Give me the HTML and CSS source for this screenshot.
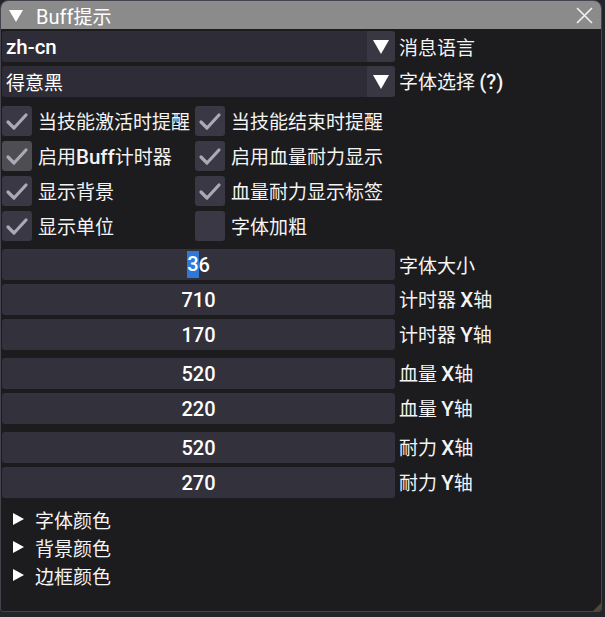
FILE: index.html
```html
<!DOCTYPE html>
<html lang="zh-CN">
<head>
<meta charset="utf-8">
<title>Buff提示</title>
<link rel="stylesheet" href="styles.css">
</head>
<body>
<div class="window">
  <div class="titlebar">
    <svg class="title-arrow" width="14" height="12" viewBox="0 0 14 12"><polygon points="0,0 14,0 7,12" fill="#fff"/></svg>
    <span class="title-text"><span class="latin">Buff</span>提示</span>
    <svg class="close" width="17" height="17" viewBox="0 0 17 17"><path d="M1 1 L16 16 M16 1 L1 16" stroke="#f2f2f2" stroke-width="1.6" fill="none"/></svg>
  </div>
  <div class="content">
    <div class="row">
      <div class="combo"><span class="combo-value latin-b">zh-cn</span><span class="combo-btn"><svg width="16" height="14" viewBox="0 0 16 14"><polygon points="0,0 16,0 8,14" fill="#fff"/></svg></span></div>
      <span class="label">消息语言</span>
    </div>
    <div class="row">
      <div class="combo"><span class="combo-value">得意黑</span><span class="combo-btn"><svg width="16" height="14" viewBox="0 0 16 14"><polygon points="0,0 16,0 8,14" fill="#fff"/></svg></span></div>
      <span class="label">字体选择 <span class="latin-b">(?)</span></span>
    </div>

    <div class="checks">
      <div class="check"><span class="box"><svg width="30" height="30" viewBox="0 0 30 30"><polyline points="6,16 12,22 24,9" class="tick"/></svg></span><span>当技能激活时提醒</span></div>
      <div class="check"><span class="box"><svg width="30" height="30" viewBox="0 0 30 30"><polyline points="6,16 12,22 24,9" class="tick"/></svg></span><span>当技能结束时提醒</span></div>
      <div class="check"><span class="box hover"><svg width="30" height="30" viewBox="0 0 30 30"><polyline points="6,16 12,22 24,9" class="tick"/></svg></span><span>启用<span class="latin-b">Buff</span>计时器</span></div>
      <div class="check"><span class="box"><svg width="30" height="30" viewBox="0 0 30 30"><polyline points="6,16 12,22 24,9" class="tick"/></svg></span><span>启用血量耐力显示</span></div>
      <div class="check"><span class="box"><svg width="30" height="30" viewBox="0 0 30 30"><polyline points="6,16 12,22 24,9" class="tick"/></svg></span><span>显示背景</span></div>
      <div class="check"><span class="box"><svg width="30" height="30" viewBox="0 0 30 30"><polyline points="6,16 12,22 24,9" class="tick"/></svg></span><span>血量耐力显示标签</span></div>
      <div class="check"><span class="box"><svg width="30" height="30" viewBox="0 0 30 30"><polyline points="6,16 12,22 24,9" class="tick"/></svg></span><span>显示单位</span></div>
      <div class="check"><span class="box"></span><span>字体加粗</span></div>
    </div>

    <div class="group">
      <div class="row"><div class="slider"><span class="sel">3</span>6</div><span class="label">字体大小</span></div>
      <div class="row"><div class="slider">710</div><span class="label">计时器 <span class="latin-b">X</span>轴</span></div>
      <div class="row"><div class="slider">170</div><span class="label">计时器 <span class="latin-b">Y</span>轴</span></div>
    </div>
    <div class="group">
      <div class="row"><div class="slider">520</div><span class="label">血量 <span class="latin-b">X</span>轴</span></div>
      <div class="row"><div class="slider">220</div><span class="label">血量 <span class="latin-b">Y</span>轴</span></div>
    </div>
    <div class="group">
      <div class="row"><div class="slider">520</div><span class="label">耐力 <span class="latin-b">X</span>轴</span></div>
      <div class="row"><div class="slider">270</div><span class="label">耐力 <span class="latin-b">Y</span>轴</span></div>
    </div>

    <div class="tree">
      <div class="node"><svg width="11" height="12" viewBox="0 0 11 12"><polygon points="0,0 11,6 0,12" fill="#fff"/></svg><span>字体颜色</span></div>
      <div class="node"><svg width="11" height="12" viewBox="0 0 11 12"><polygon points="0,0 11,6 0,12" fill="#fff"/></svg><span>背景颜色</span></div>
      <div class="node"><svg width="11" height="12" viewBox="0 0 11 12"><polygon points="0,0 11,6 0,12" fill="#fff"/></svg><span>边框颜色</span></div>
    </div>
  </div>
  <span class="grip"></span>
</div>
</body>
</html>
```
FILE: styles.css
```css
html, body {
  margin: 0;
  padding: 0;
  background: #25242b;
}
body {
  width: 605px;
  height: 617px;
  overflow: hidden;
  font-family: "Noto Sans CJK SC", "Noto Sans", sans-serif;
  font-size: 19px;
  color: #f4f4f4;
}
.window {
  position: relative;
  width: 600px;
  height: 610px;
  background: #1c1b1e;
  border: 1px solid #45444d;
  border-radius: 8px 8px 3px 3px;
  overflow: hidden;
}
.titlebar {
  height: 28px;
  background: #8b8b8b;
  display: flex;
  align-items: center;
  padding-left: 8px;
  padding-right: 8px;
  color: #fff;
}
.title-arrow {
  margin-top: 1px;
}
.title-text {
  margin-left: 13px;
  flex: 1;
}
.latin {
  font-family: "Roboto", "Noto Sans", sans-serif;
  font-size: 20px;
}
.latin-b {
  font-family: "Roboto", "Noto Sans", sans-serif;
  font-weight: 500;
  font-size: 20.5px;
}
.content {
  padding: 2px 1px 0 1px;
  display: flex;
  flex-direction: column;
  gap: 4px;
}
.row {
  display: flex;
  align-items: center;
  gap: 4px;
  height: 31px;
}
.label {
  white-space: nowrap;
  line-height: 31px;
}
.combo {
  width: 393px;
  height: 31px;
  display: flex;
  border-radius: 3px;
  overflow: hidden;
}
.combo-value {
  flex: 1;
  background: #2e2c36;
  display: flex;
  align-items: center;
  padding-left: 4px;
  color: #fff;
}
.combo-btn {
  width: 28px;
  background: #393742;
  display: flex;
  align-items: center;
  justify-content: center;
}
.checks {
  margin-top: 4px;
  display: grid;
  grid-template-columns: 193px 1fr;
  row-gap: 4px;
}
.check {
  display: flex;
  align-items: center;
  gap: 6px;
  height: 31px;
  white-space: nowrap;
}
.box {
  width: 30px;
  height: 30px;
  border-radius: 3px;
  background: #3a3845;
  display: block;
  flex: none;
}
.box svg {
  display: block;
}
.box.hover {
  background: #4e4d52;
}
.tick {
  fill: none;
  stroke: #aca9b7;
  stroke-width: 3.2;
  stroke-linecap: round;
  stroke-linejoin: round;
}
.group {
  margin-top: 4px;
  display: flex;
  flex-direction: column;
  gap: 4px;
}
.slider {
  width: 393px;
  height: 31px;
  background: #33313c;
  border-radius: 3px;
  display: flex;
  align-items: center;
  justify-content: center;
  font-family: "Roboto", "Noto Sans", sans-serif;
  font-weight: 500;
  font-size: 20px;
  color: #fff;
}
.sel {
  background: #2d78d8;
  height: 27px;
  line-height: 27px;
  display: inline-block;
}
.tree {
  margin-top: 5px;
  display: flex;
  flex-direction: column;
  gap: 4px;
}
.node {
  height: 24px;
  display: flex;
  align-items: center;
  gap: 11px;
  padding-left: 11px;
}
.node svg {
  flex: none;
}
.grip {
  position: absolute;
  right: 0;
  bottom: 0;
  width: 0;
  height: 0;
  border-left: 8px solid transparent;
  border-bottom: 8px solid #4a4a36;
}
```
